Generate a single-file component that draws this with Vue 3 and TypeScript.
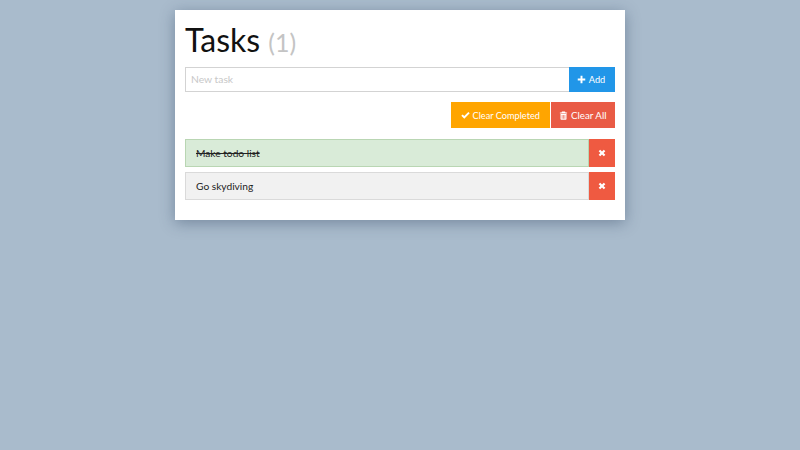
<script setup lang="ts">
import { ref, computed } from 'vue'

interface Task {
  id: number
  title: string
  done: boolean
}

const tasks = ref<Task[]>([
  { id: 1, title: 'Make todo list', done: true },
  { id: 2, title: 'Go skydiving', done: false },
])

const remaining = computed(() => tasks.value.filter((t) => !t.done).length)
</script>

<template>
  <div class="page">
    <main class="card">
      <h1 class="title">Tasks <small class="count">({{ remaining }})</small></h1>

      <form class="add-form" @submit.prevent>
        <input class="add-input" type="text" placeholder="New task" />
        <button class="btn btn-add" type="submit">
          <svg class="icon" viewBox="0 0 12 12"><path d="M4.700 1h2.600v3.700H11v2.600H7.300V11H4.700V7.300H1V4.700h3.700z" /></svg>
          Add
        </button>
      </form>

      <div class="actions">
        <button class="btn btn-completed" type="button">
          <svg class="icon" viewBox="0 0 12 12"><path d="M4.400 10.300.4 6.300l1.800-1.800 2.200 2.200 5.400-5.400 1.800 1.800z" /></svg>
          Clear Completed
        </button>
        <button class="btn btn-clear" type="button">
          <svg class="icon" viewBox="0 0 12 12"><path d="M4 .8h4l.7 1.200h2.100v1.300H1.200V2h2.100zM2 4h8v6.600c0 .5-.4.9-.9.9H2.900c-.5 0-.9-.4-.9-.9zm1.700 1.200v5h.8v-5zm1.900 0v5h.8v-5zm1.900 0v5h.8v-5z" /></svg>
          Clear All
        </button>
      </div>

      <ul class="list">
        <li v-for="task in tasks" :key="task.id" class="row">
          <span class="task" :class="{ done: task.done }">{{ task.title }}</span>
          <button class="btn btn-delete" type="button" aria-label="Delete">
            <svg class="icon icon-x" viewBox="0 0 12 12"><path d="M3.300 1 6 3.700 8.700 1 11 3.300 8.300 6 11 8.700 8.700 11 6 8.300 3.300 11 1 8.700 3.700 6 1 3.300z" /></svg>
          </button>
        </li>
      </ul>
    </main>
  </div>
</template>

<style>
html,
body {
  margin: 0;
  background: #a9bbcc;
}
</style>

<style scoped>
.page {
  min-height: 450px;
  padding-top: 10px;
  box-sizing: border-box;
  font-family: Lato, "Noto Sans", sans-serif;
  font-size: 13px;
}

.card {
  width: 450px;
  box-sizing: border-box;
  margin: 0 auto;
  padding: 10px 10px 20px;
  background: #fff;
  box-shadow: 0 3px 14px rgba(40, 60, 90, 0.4);
}

.title {
  margin: 0;
  height: 47px;
  font-size: 32px;
  line-height: 39px;
  font-weight: 400;
  color: #111;
}

.count {
  font-size: 25px;
  color: #c4c4c4;
}

.add-form {
  display: flex;
  height: 25px;
}

.add-input {
  flex: 1;
  min-width: 0;
  box-sizing: border-box;
  padding: 0 5px 2px;
  border: 1px solid #d3d3d3;
  border-right: 0;
  outline: none;
  font: inherit;
  font-size: 10.3px;
}

.add-input::placeholder {
  color: #c8c8c8;
}

.btn {
  display: flex;
  align-items: center;
  justify-content: center;
  gap: 3px;
  box-sizing: border-box;
  padding: 0;
  border: 0;
  color: #fff;
  font: inherit;
  font-size: 9.2px;
}

.icon {
  width: 9px;
  height: 9px;
  fill: #fff;
}

.icon-x {
  width: 8px;
  height: 8px;
}

.btn-add {
  width: 46px;
  padding-right: 2px;
  background: #2196e8;
}

.actions {
  display: flex;
  justify-content: flex-end;
  gap: 1px;
  height: 26px;
  margin-top: 10px;
}

.btn-completed {
  width: 98.500px;
  background: #ffa500;
}

.btn-clear {
  width: 64.500px;
  font-size: 9.800px;
  background: #e95b45;
}

.list {
  list-style: none;
  margin: 11px 0 0;
  padding: 0;
  display: flex;
  flex-direction: column;
  gap: 5px;
}

.row {
  display: flex;
  height: 28px;
}

.task {
  flex: 1;
  display: flex;
  align-items: center;
  box-sizing: border-box;
  padding: 0 10px;
  border: 1px solid #dadada;
  background: #f1f1f1;
  color: #222;
  font-size: 10.2px;
}

.task.done {
  border-color: #b9d6b3;
  background: #d9ebd8;
  text-decoration: line-through;
}

.btn-delete {
  width: 26px;
  background: #ef5a41;
}
</style>
